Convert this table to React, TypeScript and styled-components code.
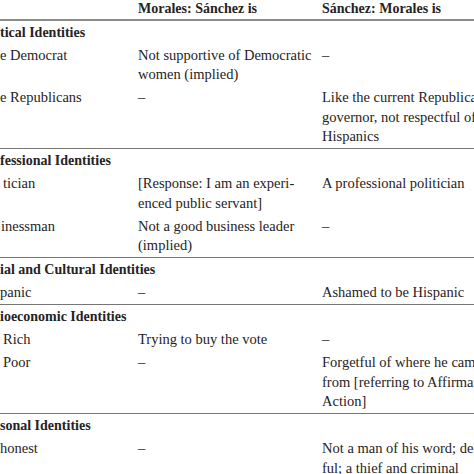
import React from "react";
import styled, { createGlobalStyle } from "styled-components";

const GlobalStyle = createGlobalStyle`
  html, body {
    margin: 0;
    padding: 0;
    background: #ffffff;
  }
`;

const Frame = styled.div`
  width: 474px;
  height: 474px;
  overflow: hidden;
  background: #ffffff;
`;

const Table = styled.table`
  width: 560px;
  border-collapse: collapse;
  table-layout: fixed;
  font-family: "Liberation Serif", "Times New Roman", serif;
  font-size: 14.5px;
  color: #262324;
`;

const HeadCell = styled.th`
  text-align: left;
  font-family: "Liberation Serif", "Times New Roman", serif;
  font-weight: 700;
  font-size: 14px;
  line-height: 17px;
  padding: 0 0 1.75px;
  border-bottom: 2px solid #8c8c8c;
  white-space: nowrap;
`;

const SectionCell = styled.td<{ $rule?: boolean }>`
  font-family: "Liberation Serif", "Times New Roman", serif;
  font-weight: 700;
  font-size: 14px;
  line-height: 19.5px;
  padding: 1.75px 0;
  white-space: nowrap;
  border-top: ${(p) => (p.$rule ? "1.5px solid #767676" : "none")};
`;

const Cell = styled.td<{ $indent?: number }>`
  font-family: "Liberation Serif", "Times New Roman", serif;
  font-size: 14.5px;
  vertical-align: top;
  line-height: 19.5px;
  padding: 1.75px 0 1.75px ${(p) => p.$indent ?? 0}px;
  white-space: nowrap;
`;

type Row = { label: string; indent?: number; a: string[]; b: string[] };
type Section = { title: string; rows: Row[] };

const sections: Section[] = [
  {
    title: "tical Identities",
    rows: [
      { label: "e Democrat", a: ["Not supportive of Democratic", "women (implied)"], b: ["–"] },
      {
        label: "e Republicans",
        a: ["–"],
        b: ["Like the current Republican", "governor, not respectful of", "Hispanics"],
      },
    ],
  },
  {
    title: "fessional Identities",
    rows: [
      {
        label: "tician",
        indent: 3,
        a: ["[Response: I am an experi-", "enced public servant]"],
        b: ["A professional politician"],
      },
      { label: "inessman", indent: 1, a: ["Not a good business leader", "(implied)"], b: ["–"] },
    ],
  },
  {
    title: "ial and Cultural Identities",
    rows: [{ label: "panic", a: ["–"], b: ["Ashamed to be Hispanic"] }],
  },
  {
    title: "ioeconomic Identities",
    rows: [
      { label: "Rich", indent: 3, a: ["Trying to buy the vote"], b: ["–"] },
      {
        label: "Poor",
        indent: 3,
        a: ["–"],
        b: ["Forgetful of where he came", "from [referring to Affirmative", "Action]"],
      },
    ],
  },
  {
    title: "sonal Identities",
    rows: [
      { label: "honest", a: ["–"], b: ["Not a man of his word; deceit-", "ful; a thief and criminal"] },
    ],
  },
];

const Lines = ({ lines }: { lines: string[] }) => (
  <>
    {lines.map((l, i) => (
      <React.Fragment key={i}>
        {i > 0 && <br />}
        {l}
      </React.Fragment>
    ))}
  </>
);

export default function App() {
  return (
    <Frame>
      <GlobalStyle />
      <Table>
        <colgroup>
          <col style={{ width: 138 }} />
          <col style={{ width: 184 }} />
          <col style={{ width: 238 }} />
        </colgroup>
        <thead>
          <tr>
            <HeadCell />
            <HeadCell>Morales: Sánchez is</HeadCell>
            <HeadCell>Sánchez: Morales is</HeadCell>
          </tr>
        </thead>
        <tbody>
          {sections.map((s, si) => (
            <React.Fragment key={s.title}>
              <tr>
                <SectionCell colSpan={3} $rule={si > 0}>
                  {s.title}
                </SectionCell>
              </tr>
              {s.rows.map((r) => (
                <tr key={r.label}>
                  <Cell $indent={r.indent}>{r.label}</Cell>
                  <Cell>
                    <Lines lines={r.a} />
                  </Cell>
                  <Cell>
                    <Lines lines={r.b} />
                  </Cell>
                </tr>
              ))}
            </React.Fragment>
          ))}
        </tbody>
      </Table>
    </Frame>
  );
}
